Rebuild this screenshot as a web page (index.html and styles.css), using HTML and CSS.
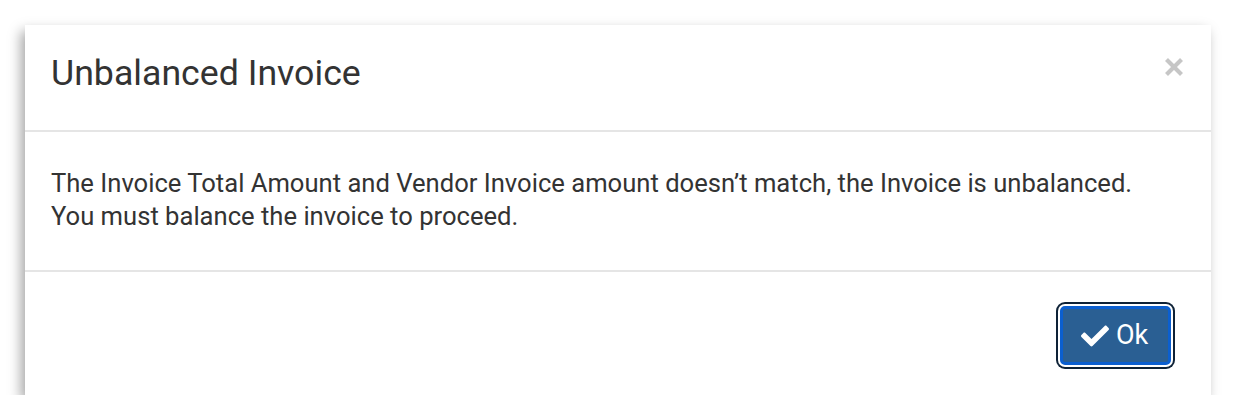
FILE: index.html
```html
<!DOCTYPE html>
<html>
<head>
<meta charset="utf-8">
<link rel="stylesheet" href="styles.css">
</head>
<body>
<div class="modal">
  <div class="modal-header">
    <h4 class="modal-title">Unbalanced Invoice</h4>
    <button class="close" aria-label="Close">
      <svg width="20" height="20" viewBox="0 0 20 20"><path d="M2.5 2.5 L17.5 17.5 M17.5 2.5 L2.5 17.5" stroke="#c6c6c6" stroke-width="4.2" stroke-linecap="butt"/></svg>
    </button>
  </div>
  <div class="modal-body">
    <p>The Invoice Total Amount and Vendor Invoice amount doesn’t match, the Invoice is unbalanced.<br>You must balance the invoice to proceed.</p>
  </div>
  <div class="modal-footer">
    <button class="btn-ok">
      <svg class="check" width="28" height="22" viewBox="0 0 512 400"><path fill="#fff" d="M173.898 383.404l-166.4-166.4c-9.997-9.997-9.997-26.206 0-36.204l36.203-36.204c9.997-9.998 26.207-9.998 36.204 0L192 256.69 432.095 16.596c9.997-9.997 26.207-9.997 36.204 0l36.203 36.204c9.997 9.997 9.997 26.206 0 36.204l-294.4 294.401c-9.998 9.997-26.207 9.997-36.204-.001z"/></svg>
      <span>Ok</span>
    </button>
  </div>
</div>
</body>
</html>
```
FILE: styles.css
```css
html, body {
  margin: 0;
  padding: 0;
  background: #ffffff;
}
body {
  padding: 25px 25px 0 25px;
  font-family: Roboto, "Liberation Sans", sans-serif;
  color: #333333;
}
.modal {
  width: 1186px;
  background: #ffffff;
  box-shadow: -4px 6px 12px rgba(0, 0, 0, 0.35);
}
.modal-header {
  display: flex;
  justify-content: space-between;
  align-items: center;
  height: 107px;
  padding: 0 27px 0 26px;
  box-sizing: border-box;
  border-bottom: 2px solid #e5e5e5;
}
.modal-title {
  margin: 0;
  font-size: 35.7px;
  font-weight: 400;
  color: #333333;
  line-height: 1;
  position: relative;
  top: -4px;
}
.close {
  border: 0;
  background: none;
  padding: 0;
  margin: 0;
  width: 20px;
  height: 20px;
  display: flex;
  position: relative;
  top: -11px;
}
.modal-body {
  height: 140px;
  box-sizing: border-box;
  padding: 0 26px;
  display: flex;
  align-items: center;
  border-bottom: 2px solid #e5e5e5;
}
.modal-body p {
  margin: 0;
  font-size: 25.6px;
  line-height: 33px;
  color: #333333;
  position: relative;
  top: -1px;
}
.modal-footer {
  height: 123px;
  box-sizing: border-box;
  display: flex;
  justify-content: flex-end;
  align-items: center;
  padding: 0 40px 0 0;
}
.btn-ok {
  display: flex;
  align-items: center;
  gap: 7px;
  width: 111px;
  height: 59px;
  box-sizing: border-box;
  padding: 0 0 0 18px;
  background: #2a5f93;
  border: 3px solid #0b5fd0;
  border-radius: 5px;
  box-shadow: 0 0 0 2px #ffffff, 0 0 0 4px #0e2237;
  color: #ffffff;
  font-family: Roboto, "Liberation Sans", sans-serif;
  font-size: 27px;
  position: relative;
  top: 2px;
}
.btn-ok span {
  line-height: 1;
}
.check {
  display: block;
}
```
